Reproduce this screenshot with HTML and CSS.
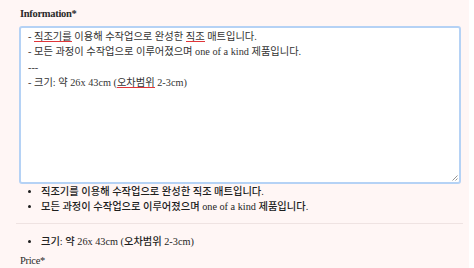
FILE: index.html
```html
<!DOCTYPE html>
<html lang="ko">
<head>
<meta charset="utf-8">
<link rel="stylesheet" href="styles.css">
</head>
<body>
<div class="panel">
  <div class="label">Information*</div>
  <div class="editor">
    <div class="line">- <span class="typo">직조기를</span> 이용해 수작업으로 완성한 <span class="typo">직조</span> 매트입니다.</div>
    <div class="line">- 모든 과정이 수작업으로 이루어졌으며 one of a kind 제품입니다.</div>
    <div class="line">---</div>
    <div class="line">- 크기: 약 26x 43cm (<span class="typo">오차범위</span> 2-3cm)</div>
    <svg class="grip" width="7" height="7" viewBox="0 0 7 7"><path d="M6.5 1.5 L1.5 6.5 M6.5 4.5 L4.5 6.5" stroke="#8a8a8a" stroke-width="0.9" fill="none"/></svg>
  </div>
  <ul class="preview">
    <li>직조기를 이용해 수작업으로 완성한 직조 매트입니다.</li>
    <li>모든 과정이 수작업으로 이루어졌으며 one of a kind 제품입니다.</li>
  </ul>
  <hr class="rule">
  <ul class="preview">
    <li>크기: 약 26x 43cm (오차범위 2-3cm)</li>
  </ul>
  <div class="label price">Price*</div>
</div>
</body>
</html>
```
FILE: styles.css
```css
html, body {
  margin: 0;
  padding: 0;
  background: #ffffff;
}
body {
  font-family: "Liberation Serif", "Noto Sans CJK KR", serif;
  color: #2b2b2b;
}
.panel {
  width: 469px;
  height: 268px;
  overflow: hidden;
  background: #fff6f5;
  box-sizing: border-box;
  padding: 7px 8px 0 19px;
}
.label {
  font-weight: bold;
  font-size: 10.5px;
  line-height: 14px;
  letter-spacing: -0.3px;
  padding-left: 1px;
  color: #2a2a2a;
  margin-bottom: 5px;
}
.editor {
  position: relative;
  height: 158px;
  box-sizing: border-box;
  border: 2px solid #b5d2f5;
  border-radius: 3px;
  background: #ffffff;
  padding: 1px 7px;
  font-size: 10.25px;
  line-height: 15.4px;
  color: #333333;
}
.typo {
  background: linear-gradient(#e0363a, #e0363a) no-repeat left bottom / 100% 1px;
  padding-bottom: 0;
}
.grip {
  position: absolute;
  right: 1px;
  bottom: 1px;
}
.preview {
  margin: 0;
  padding: 0 0 0 22px;
  font-size: 10.25px;
  line-height: 15px;
  font-weight: 500;
  color: #1e1e1e;
}
.rule {
  border: 0;
  border-top: 1px solid #efe3e2;
  margin: 9px -2px 10px -3px;
  height: 0;
}
.price {
  margin-top: 5px;
  font-weight: normal;
}
```
